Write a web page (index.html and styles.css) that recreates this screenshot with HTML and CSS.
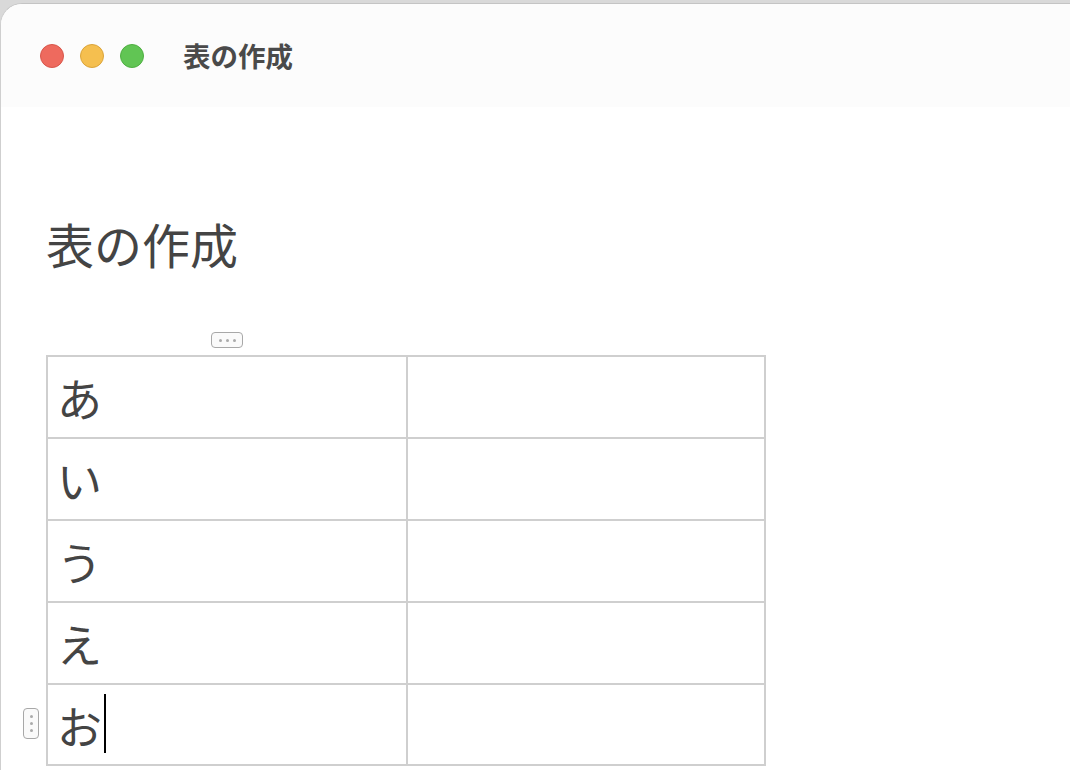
FILE: index.html
```html
<!DOCTYPE html>
<html lang="ja">
<head>
<meta charset="utf-8">
<link rel="stylesheet" href="styles.css">
</head>
<body>
<div class="window">
  <div class="titlebar">
    <div class="lights">
      <span class="light red"></span>
      <span class="light yellow"></span>
      <span class="light green"></span>
    </div>
    <div class="wtitle">表の作成</div>
  </div>
  <div class="content">
    <h1 class="doc-title">表の作成</h1>
    <div class="table-wrap">
      <div class="col-handle"><span></span><span></span><span></span></div>
      <table class="grid">
        <tr><td>あ</td><td></td></tr>
        <tr><td>い</td><td></td></tr>
        <tr><td>う</td><td></td></tr>
        <tr><td>え</td><td></td></tr>
        <tr class="last"><td><span class="txt">お</span><span class="caret"></span><div class="row-handle"><span></span><span></span><span></span></div></td><td></td></tr>
      </table>
    </div>
  </div>
</div>
</body>
</html>
```
FILE: styles.css
```css
html, body {
  margin: 0;
  padding: 0;
}
body {
  background: #d9d9d9;
  font-family: "Noto Sans CJK JP", "Noto Sans", sans-serif;
  color: #444;
  overflow: hidden;
  height: 770px;
}
.window {
  margin-top: 3px;
  background: #ffffff;
  border-top: 1px solid #c4c4c4;
  border-left: 1px solid #cfcfcf;
  border-top-left-radius: 22px;
  height: 767px;
  overflow: hidden;
}
.titlebar {
  height: 103px;
  background: #fcfcfc;
  display: flex;
  align-items: center;
  padding-left: 39px;
}
.lights {
  display: flex;
  gap: 16px;
  margin-top: 1px;
}
.light {
  width: 24px;
  height: 24px;
  border-radius: 50%;
  box-sizing: border-box;
}
.red { background: #ee6a5e; border: 1px solid #d8564b; }
.yellow { background: #f5bf4f; border: 1px solid #dba43a; }
.green { background: #61c554; border: 1px solid #4faf42; }
.wtitle {
  margin-left: 39px;
  font-size: 27.5px;
  font-weight: 700;
  color: #4a4a4a;
  margin-top: -2px;
}
.content {
  padding-left: 45px;
  padding-top: 108px;
}
.doc-title {
  margin: 0;
  font-size: 48px;
  font-weight: 400;
  line-height: 56px;
  color: #444;
}
.table-wrap {
  position: relative;
  margin-top: 84px;
  width: 720px;
}
.col-handle {
  position: absolute;
  left: 165px;
  top: -23px;
  width: 32px;
  height: 16px;
  box-sizing: border-box;
  border: 1px solid #a8a8a8;
  border-radius: 4px;
  background: #fafafa;
  display: flex;
  justify-content: center;
  align-items: center;
  gap: 4px;
}
.col-handle span, .row-handle span {
  width: 3px;
  height: 3px;
  border-radius: 50%;
  background: #aaa;
}
.grid {
  border-collapse: collapse;
  width: 720px;
  table-layout: fixed;
}
.grid td {
  border: 2px solid #cfcfcf;
  height: 80px;
  padding: 0 0 0 9px;
  font-size: 45px;
  line-height: 1;
  color: #444;
  vertical-align: middle;
  position: relative;
}
.grid td:first-child { width: 349px; }
.grid tr.last td { height: 79px; }
.caret {
  display: inline-block;
  width: 2px;
  height: 59px;
  background: #000;
  vertical-align: middle;
  margin-left: 2px;
  margin-top: -4px;
}
.txt {
  vertical-align: middle;
}
.row-handle {
  position: absolute;
  left: -25px;
  top: 23px;
  width: 16px;
  height: 31px;
  box-sizing: border-box;
  border: 1px solid #a8a8a8;
  border-radius: 4px;
  background: #fafafa;
  display: flex;
  flex-direction: column;
  justify-content: center;
  align-items: center;
  gap: 4px;
}
```
